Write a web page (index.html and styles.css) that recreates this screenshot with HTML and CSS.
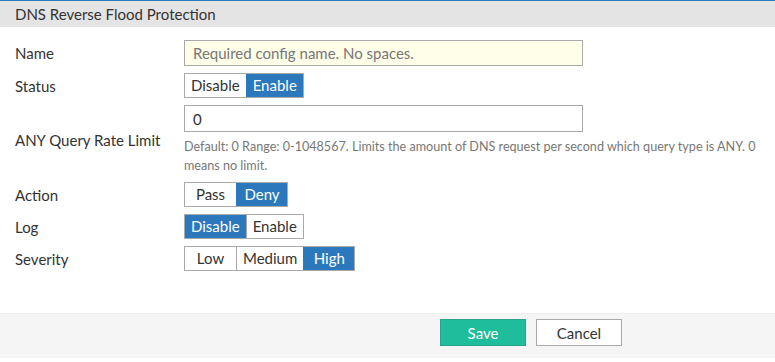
FILE: index.html
```html
<!DOCTYPE html>
<html lang="en">
<head>
  <meta charset="UTF-8">
  <title>DNS Reverse Flood Protection</title>
  <link rel="stylesheet" href="styles.css">
</head>
<body>
  <div class="panel">
    <div class="panel__head">DNS Reverse Flood Protection</div>

    <form class="form">
      <div class="form__row">
        <label class="form__label">Name</label>
        <input class="form__input form__input--required" type="text" placeholder="Required config name. No spaces.">
      </div>

      <div class="form__row">
        <span class="form__label">Status</span>
        <div class="switch">
          <span class="switch__item">Disable</span>
          <span class="switch__item switch__item--on">Enable</span>
        </div>
      </div>

      <div class="form__row">
        <label class="form__label">ANY Query Rate Limit</label>
        <div class="form__field">
          <input class="form__input" type="text" value="0">
          <div class="form__help">Default: 0 Range: 0-1048567. Limits the amount of DNS request per second which query type is ANY. 0 means no limit.</div>
        </div>
      </div>

      <div class="form__row">
        <span class="form__label">Action</span>
        <div class="switch">
          <span class="switch__item">Pass</span>
          <span class="switch__item switch__item--on">Deny</span>
        </div>
      </div>

      <div class="form__row">
        <span class="form__label">Log</span>
        <div class="switch">
          <span class="switch__item switch__item--on">Disable</span>
          <span class="switch__item">Enable</span>
        </div>
      </div>

      <div class="form__row">
        <span class="form__label">Severity</span>
        <div class="switch">
          <span class="switch__item">Low</span>
          <span class="switch__item">Medium</span>
          <span class="switch__item switch__item--on">High</span>
        </div>
      </div>
    </form>

    <div class="panel__foot">
      <button class="btn btn--save" type="button">Save</button>
      <button class="btn" type="button">Cancel</button>
    </div>
  </div>
</body>
</html>
```

FILE: styles.css
```css
html, body {
  margin: 0;
  height: 100%;
  overflow: hidden;
}

body {
  font-family: Lato, "Open Sans", sans-serif;
  font-size: 15px;
  line-height: 18px;
  color: #333;
  background: #fff;
}

.panel__head {
  height: 26px;
  line-height: 26px;
  padding-left: 15px;
  border-top: 1px solid #2b78bd;
  background: #e4e4e4;
  color: #333;
}

.form {
  padding: 13px 15px 42px;
}

.form__row {
  display: grid;
  grid-template-columns: 169px 1fr;
  align-items: center;
  margin-bottom: 7px;
}

.form__row:last-child { margin-bottom: 0; }

.form__label { color: #333; }

.form__field {
  display: flex;
  flex-direction: column;
}

.form__input {
  display: block;
  box-sizing: border-box;
  width: 399px;
  height: 26px;
  margin: 0;
  padding: 0 8px;
  border: 1px solid #aaa;
  font: inherit;
  color: #333;
  background: #fff;
  outline: none;
}

.form__input--required { background: #fefee9; }
.form__input::placeholder { color: #777; }

.form__field .form__input { height: 27px; }

.form__help {
  margin-top: 5px;
  font-size: 12.6px;
  line-height: 19px;
  color: #777;
  max-width: 590px;
}

.switch {
  display: flex;
  width: max-content;
  border: 1px solid #aaa;
  height: 23px;
}

.switch__item {
  box-sizing: border-box;
  min-width: 51px;
  padding: 0 6px;
  line-height: 23px;
  text-align: center;
  color: #333;
  background: #fff;
}

.switch__item + .switch__item { border-left: 1px solid #aaa; }

.switch__item--on {
  background: #2b78bd;
  color: #fff;
}

.switch__item + .switch__item--on { border-left-color: #2b78bd; }
.switch__item--on + .switch__item { border-left-color: #aaa; }

.panel__foot {
  display: flex;
  gap: 10px;
  padding: 5px 0 12px 440px;
  border-top: 1px solid #eee;
  background: #f5f5f5;
}

.btn {
  box-sizing: border-box;
  width: 86px;
  height: 27px;
  margin: 0;
  padding: 0;
  border: 1px solid #aaa;
  background: #fff;
  font: inherit;
  color: #333;
  cursor: pointer;
}

.btn--save {
  background: #1ebd9b;
  border-color: #27a386;
  color: #fff;
}
```
